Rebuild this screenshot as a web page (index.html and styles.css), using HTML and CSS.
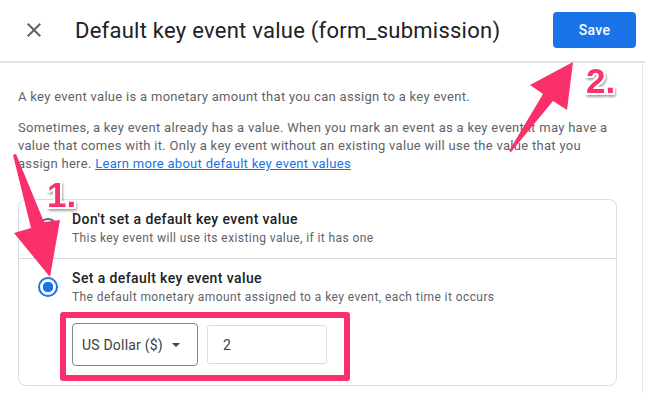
FILE: index.html
```html
<!DOCTYPE html>
<html lang="en">
<head>
<meta charset="utf-8">
<title>Default key event value</title>
<link rel="stylesheet" href="styles.css">
</head>
<body>
<div class="dialog">
  <header class="topbar">
    <span class="close">
      <svg viewBox="0 0 24 24" width="24" height="24"><path d="M19 6.41L17.59 5 12 10.59 6.41 5 5 6.41 10.59 12 5 17.59 6.41 19 12 13.41 17.59 19 19 17.59 13.41 12z"/></svg>
    </span>
    <h1 class="title">Default key event value (form_submission)</h1>
    <button class="save">Save</button>
  </header>
  <main class="content">
    <p class="desc">A key event value is a monetary amount that you can assign to a key event.</p>
    <p class="desc">Sometimes, a key event already has a value. When you mark an event as a key event it may have a value that comes with it. Only a key event without an existing value will use the value that you assign here. <a class="link" href="#">Learn more about default key event values</a></p>
    <div class="card">
      <div class="option">
        <span class="radio"></span>
        <div class="otext">
          <div class="otitle">Don't set a default key event value</div>
          <div class="osub">This key event will use its existing value, if it has one</div>
        </div>
      </div>
      <div class="option">
        <span class="radio checked"></span>
        <div class="otext">
          <div class="otitle">Set a default key event value</div>
          <div class="osub">The default monetary amount assigned to a key event, each time it occurs</div>
        </div>
        <div class="highlight">
          <div class="select">US Dollar ($)<span class="caret"></span></div>
          <div class="input">2</div>
        </div>
      </div>
    </div>
  </main>
  <svg class="annot" viewBox="0 0 645 393" width="645" height="393">
    <defs>
      <filter id="sh" x="-20%" y="-20%" width="140%" height="140%">
        <feDropShadow dx="1" dy="2" stdDeviation="1.2" flood-color="#000" flood-opacity="0.35"/>
      </filter>
    </defs>
    <polygon class="arrow" points="13,155 16,154 44,222 60,220 50,277 14,233 31,228"/>
    <polygon class="arrow" points="509,151 543,94 530,85 573,62 567,110 553,101 511,152"/>
    <text class="num" x="47" y="207" filter="url(#sh)">1.</text>
    <text class="num" x="586" y="93" filter="url(#sh)">2.</text>
  </svg>
</div>
</body>
</html>
```
FILE: styles.css
```css
* { box-sizing: border-box; }
html, body { margin: 0; padding: 0; background: #fff; }
body { font-family: Roboto, "Noto Sans", Arial, sans-serif; color: #202124; }

.dialog { position: relative; width: 645px; height: 393px; overflow: hidden; }

.topbar {
  height: 63px;
  display: flex;
  align-items: center;
  padding: 0 9px 1px 22px;
  border-bottom: 2px solid #e3e4e6;
}
.close { width: 24px; height: 24px; display: flex; }
.close svg { fill: #5f6368; }
.title {
  margin: 0 0 0 29px;
  font-size: 22px;
  font-weight: 400;
  color: #202124;
  letter-spacing: .25px;
  flex: 1;
  white-space: nowrap;
}
.save {
  width: 83px;
  height: 36px;
  border: 0;
  border-radius: 4px;
  background: #1a73e8;
  color: #fff;
  font-family: inherit;
  font-size: 14px;
  font-weight: 500;
  letter-spacing: .25px;
}

.content {
  width: 643px;
  height: 330px;
  border-right: 1px solid #e6e6e6;
  padding: 25px 0 0 18px;
}
.desc {
  margin: 0 0 13px;
  width: 600px;
  font-size: 13px;
  line-height: 18px;
  color: #5f6368;
  letter-spacing: .3px;
}
.link { color: #1a73e8; text-decoration: underline; }

.card {
  margin-top: 26px;
  width: 599px;
  border: 1px solid #dadce0;
  border-radius: 8px;
}
.option {
  display: grid;
  grid-template-columns: 20px 1fr;
  column-gap: 14px;
  align-items: center;
  padding: 9px 12px 11px 19px;
}
.option + .option { border-top: 1px solid #dadce0; padding-bottom: 4px; }
.radio {
  width: 20px; height: 20px;
  border: 2px solid #5f6368;
  border-radius: 50%;
}
.radio.checked {
  border-color: #1a73e8;
  background: radial-gradient(circle, #1a73e8 0 5px, #fff 5.5px);
}
.otitle { font-size: 14px; font-weight: 500; line-height: 20px; color: #202124; letter-spacing: .4px; }
.osub { font-size: 12px; line-height: 18px; color: #5f6368; letter-spacing: .42px; }

.highlight {
  grid-column: 2;
  justify-self: start;
  margin: 6px 0 0 -12px;
  border: 6px solid #f9306b;
  border-radius: 3px;
  padding: 5px 17px 9px 6px;
  display: flex;
  align-items: center;
  gap: 9px;
}
.select {
  width: 126px; height: 43px;
  border: 1px solid #80868b;
  border-radius: 4px;
  display: flex;
  align-items: center;
  padding-left: 9px;
  font-size: 14px;
  letter-spacing: .2px;
  color: #3c4043;
}
.caret {
  margin-left: 9px;
  width: 0; height: 0;
  border-left: 4px solid transparent;
  border-right: 4px solid transparent;
  border-top: 4px solid #3c4043;
}
.input {
  width: 120px; height: 39px;
  border: 1px solid #dadce0;
  border-radius: 3px;
  display: flex;
  align-items: center;
  padding-left: 15px;
  font-size: 14px;
  color: #3c4043;
}

.annot { position: absolute; left: 0; top: 0; pointer-events: none; }
.arrow { fill: #f9306b; }
.num {
  font-family: "Liberation Sans", Arial, sans-serif;
  font-weight: 700;
  font-size: 35px;
  fill: #f9306b;
  stroke: #fff;
  stroke-width: 4px;
  stroke-linejoin: round;
  paint-order: stroke;
}
```
